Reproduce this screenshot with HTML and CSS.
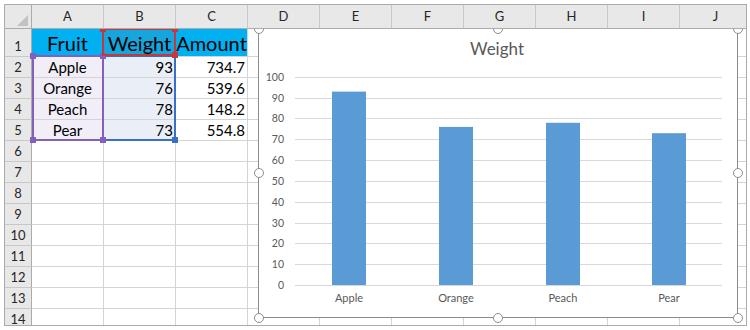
FILE: index.html
```html
<!DOCTYPE html>
<html lang="en">

<head>
    <meta charset="UTF-8">
    <title>Weight chart</title>
    <link rel="stylesheet" href="styles.css">
</head>

<body>

    <div class="sheet">

        <div class="row col-head">
            <div class="corner"><span class="tri"></span></div>
            <div>A</div><div>B</div><div>C</div><div>D</div><div>E</div>
            <div>F</div><div>G</div><div>H</div><div>I</div><div>J</div>
        </div>

        <div class="row tall">
            <div class="num">1</div>
            <div class="hd">Fruit</div>
            <div class="hd sel">Weight</div>
            <div class="hd">Amount</div>
            <div></div><div></div><div></div><div></div><div></div><div></div><div></div>
        </div>

        <div class="row">
            <div class="num">2</div>
            <div class="fruit">Apple</div><div class="weight">93</div><div class="amount">734.7</div>
            <div></div><div></div><div></div><div></div><div></div><div></div><div></div>
        </div>
        <div class="row">
            <div class="num">3</div>
            <div class="fruit">Orange</div><div class="weight">76</div><div class="amount">539.6</div>
            <div></div><div></div><div></div><div></div><div></div><div></div><div></div>
        </div>
        <div class="row">
            <div class="num">4</div>
            <div class="fruit">Peach</div><div class="weight">78</div><div class="amount">148.2</div>
            <div></div><div></div><div></div><div></div><div></div><div></div><div></div>
        </div>
        <div class="row">
            <div class="num">5</div>
            <div class="fruit">Pear</div><div class="weight">73</div><div class="amount">554.8</div>
            <div></div><div></div><div></div><div></div><div></div><div></div><div></div>
        </div>

        <div class="row"><div class="num">6</div><div></div><div></div><div></div><div></div><div></div><div></div><div></div><div></div><div></div><div></div></div>
        <div class="row"><div class="num">7</div><div></div><div></div><div></div><div></div><div></div><div></div><div></div><div></div><div></div><div></div></div>
        <div class="row"><div class="num">8</div><div></div><div></div><div></div><div></div><div></div><div></div><div></div><div></div><div></div><div></div></div>
        <div class="row"><div class="num">9</div><div></div><div></div><div></div><div></div><div></div><div></div><div></div><div></div><div></div><div></div></div>
        <div class="row"><div class="num">10</div><div></div><div></div><div></div><div></div><div></div><div></div><div></div><div></div><div></div><div></div></div>
        <div class="row"><div class="num">11</div><div></div><div></div><div></div><div></div><div></div><div></div><div></div><div></div><div></div><div></div></div>
        <div class="row"><div class="num">12</div><div></div><div></div><div></div><div></div><div></div><div></div><div></div><div></div><div></div><div></div></div>
        <div class="row"><div class="num">13</div><div></div><div></div><div></div><div></div><div></div><div></div><div></div><div></div><div></div><div></div></div>
        <div class="row"><div class="num">14</div><div></div><div></div><div></div><div></div><div></div><div></div><div></div><div></div><div></div><div></div></div>

        <!-- range highlights of the chart source -->
        <div class="range blue"><span class="sq br"></span></div>
        <div class="range purple">
            <span class="sq tl"></span><span class="sq tr"></span>
            <span class="sq bl"></span><span class="sq br"></span>
        </div>
        <div class="range red">
            <span class="sq tl"></span><span class="sq tr"></span><span class="sq br"></span>
        </div>

        <!-- chart object -->
        <div class="chart">
            <svg class="plot" width="478" height="288">
                <text class="title" x="238" y="26">Weight</text>

                <g class="grid">
                    <line x1="36" x2="463" y1="48.5" y2="48.5" />
                    <line x1="36" x2="463" y1="69.5" y2="69.5" />
                    <line x1="36" x2="463" y1="89.5" y2="89.5" />
                    <line x1="36" x2="463" y1="110.5" y2="110.5" />
                    <line x1="36" x2="463" y1="131.5" y2="131.5" />
                    <line x1="36" x2="463" y1="152.5" y2="152.5" />
                    <line x1="36" x2="463" y1="173.5" y2="173.5" />
                    <line x1="36" x2="463" y1="194.5" y2="194.5" />
                    <line x1="36" x2="463" y1="214.5" y2="214.5" />
                    <line x1="36" x2="463" y1="235.5" y2="235.5" />
                    <line x1="36" x2="463" y1="256.5" y2="256.5" />
                </g>

                <g class="ylabels">
                    <text x="25" y="52">100</text>
                    <text x="25" y="73">90</text>
                    <text x="25" y="93">80</text>
                    <text x="25" y="114">70</text>
                    <text x="25" y="135">60</text>
                    <text x="25" y="156">50</text>
                    <text x="25" y="177">40</text>
                    <text x="25" y="198">30</text>
                    <text x="25" y="218">20</text>
                    <text x="25" y="239">10</text>
                    <text x="25" y="260">0</text>
                </g>

                <g class="bars">
                    <rect x="73" y="62.6" width="34" height="193.4" />
                    <rect x="180" y="97.9" width="34" height="158.1" />
                    <rect x="287" y="93.8" width="34" height="162.2" />
                    <rect x="393" y="104.2" width="34" height="151.8" />
                </g>

                <g class="xlabels">
                    <text x="90" y="273">Apple</text>
                    <text x="197" y="273">Orange</text>
                    <text x="304" y="273">Peach</text>
                    <text x="410" y="273">Pear</text>
                </g>
            </svg>

            <span class="handle h-tl"></span>
            <span class="handle h-tc"></span>
            <span class="handle h-tr"></span>
            <span class="handle h-ml"></span>
            <span class="handle h-mr"></span>
            <span class="handle h-bl"></span>
            <span class="handle h-bc"></span>
            <span class="handle h-br"></span>
        </div>

    </div>

</body>

</html>
```

FILE: styles.css
```css
body {
    margin: 0;
    padding: 4px;
    background-color: #fff;
    font-family: Lato, "Liberation Sans", sans-serif;
    color: #000;
}

.sheet {
    position: relative;
    width: 743px;
    height: 322px;
    border: 1px solid #ababab;
    box-sizing: border-box;
    overflow: hidden;
}

/* grid rows */
.row {
    display: grid;
    grid-template-columns: 27px repeat(10, 72px);
    height: 21px;
}

.row > div {
    display: flex;
    align-items: flex-end;
    box-sizing: border-box;
    border-right: 1px solid #d4d4d4;
    border-bottom: 1px solid #d4d4d4;
    padding: 0 2px 1px;
    font-size: 15px;
    line-height: 18px;
    white-space: nowrap;
    overflow: hidden;
}

.row.tall {
    height: 28px;
}

/* column letters */
.col-head {
    position: relative;
    z-index: 3;
    height: 24px;
    background-color: #e8e8e8;
}

.col-head > div {
    justify-content: center;
    border-right: 1px solid #c8c8c8;
    border-bottom: 1px solid #ababab;
    font-size: 13px;
    color: #262626;
    padding-bottom: 3px;
}

.col-head .corner {
    justify-content: flex-end;
    border-right-color: #ababab;
    padding: 0 3px 2px 0;
}

.tri {
    width: 0;
    height: 0;
    border-left: 11px solid transparent;
    border-bottom: 11px solid #c2c2c2;
}

/* row numbers */
.row > .num {
    justify-content: center;
    background-color: #e8e8e8;
    border-right: 1px solid #ababab;
    border-bottom-color: #c8c8c8;
    font-size: 13px;
    color: #262626;
}

/* table content */
.row > .hd {
    justify-content: center;
    background-color: #00b0f0;
    font-size: 20px;
    line-height: 24px;
    padding: 0 0 1px;
}

.row > .hd.sel {
    background-color: #16a5dc;
}

.row > .fruit {
    justify-content: center;
    background-color: #f1eef8;
}

.row > .weight {
    justify-content: flex-end;
    background-color: #e9eef7;
}

.row > .amount {
    justify-content: flex-end;
}

/* coloured source ranges */
.range {
    position: absolute;
    z-index: 1;
    box-sizing: border-box;
    border: 2px solid;
}

.range.purple {
    left: 27px;
    top: 50px;
    width: 72px;
    height: 86px;
    border-color: #8260bc;
}

.range.red {
    left: 97px;
    top: 23px;
    width: 74px;
    height: 28px;
    border-color: #c2393f;
}

.range.blue {
    left: 97px;
    top: 50px;
    width: 74px;
    height: 86px;
    border-color: #3a6fc8;
}

.sq {
    position: absolute;
    width: 6px;
    height: 6px;
}

.purple .sq { background-color: #8260bc; }
.red .sq { background-color: #c2393f; }
.blue .sq { background-color: #3a6fc8; }

.sq.tl { left: -4px; top: -4px; }
.sq.tr { right: -4px; top: -4px; }
.sq.bl { left: -4px; bottom: -4px; }
.sq.br { right: -4px; bottom: -4px; }

/* chart */
.chart {
    position: absolute;
    z-index: 2;
    left: 253px;
    top: 23px;
    width: 480px;
    height: 290px;
    box-sizing: border-box;
    border: 1px solid #8c8c8c;
    background-color: #fff;
}

.plot {
    display: block;
    font-family: Lato, "Liberation Sans", sans-serif;
}

.title {
    font-size: 17px;
    fill: #595959;
    text-anchor: middle;
}

.grid line {
    stroke: #d9d9d9;
    stroke-width: 1;
}

.ylabels text {
    font-size: 10.5px;
    fill: #595959;
    text-anchor: end;
}

.xlabels text {
    font-size: 11px;
    fill: #595959;
    text-anchor: middle;
}

.bars rect {
    fill: #5b9bd5;
}

.handle {
    position: absolute;
    width: 10px;
    height: 10px;
    box-sizing: border-box;
    border: 1.5px solid #8c8c8c;
    border-radius: 50%;
    background-color: #fff;
}

.h-tl { left: -5.5px; top: -5.5px; }
.h-tc { left: calc(50% - 5px); top: -5.5px; }
.h-tr { right: -5.5px; top: -5.5px; }
.h-ml { left: -5.5px; top: calc(50% - 5px); }
.h-mr { right: -5.5px; top: calc(50% - 5px); }
.h-bl { left: -5.5px; bottom: -5.5px; }
.h-bc { left: calc(50% - 5px); bottom: -5.5px; }
.h-br { right: -5.5px; bottom: -5.5px; }
```
